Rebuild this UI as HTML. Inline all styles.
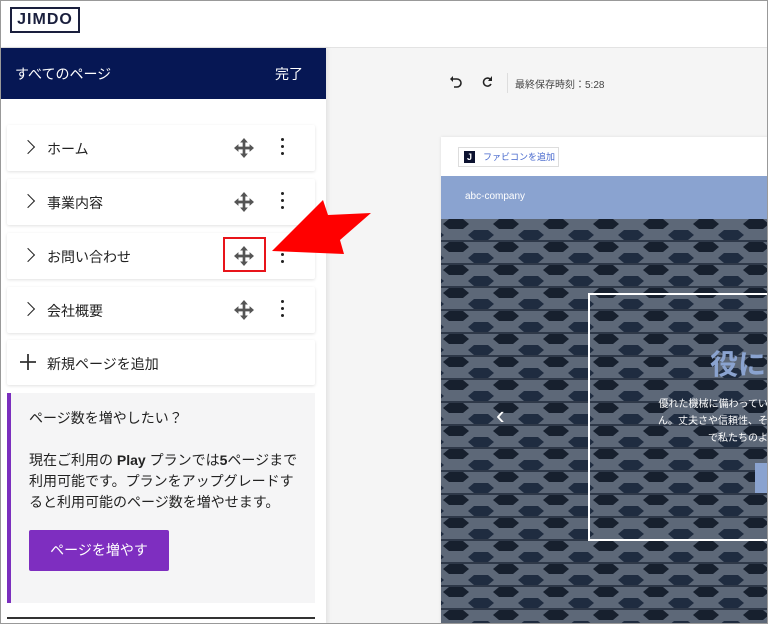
<!DOCTYPE html>
<html><head><meta charset="utf-8"><style>
*{margin:0;padding:0;box-sizing:border-box}
body{width:768px;height:624px;overflow:hidden;background:#f5f5f5;font-family:"Liberation Sans","Noto Sans CJK JP",sans-serif;position:relative;color:#222}
.abs{position:absolute}
.top{left:0;top:0;width:768px;height:48px;background:#fff;border-bottom:1px solid #e3e3e3}
.logo{left:10px;top:7px;width:70px;height:26px;border:2px solid #1a1f3d;font-weight:bold;font-size:16px;letter-spacing:1px;color:#1a1f3d;text-align:center;line-height:22px}
.side{left:0;top:48px;width:326px;height:576px;background:#fff;box-shadow:2px 0 4px rgba(0,0,0,.08)}
.hdr{left:0;top:48px;width:326px;height:51px;background:#061754;color:#fff;font-size:14px}
.card{left:7px;width:308px;height:46px;background:#fff;box-shadow:0 1px 3px rgba(0,0,0,.12);border-radius:2px;font-size:14px}
.card .t{position:absolute;left:40px;top:14px}
.chev{position:absolute;left:16px;top:17px;width:10px;height:10px;border-right:1.8px solid #222;border-top:1.8px solid #222;transform:rotate(45deg)}
.dots{position:absolute;left:274px;top:13px;width:3px}
.dots i{display:block;width:3px;height:3px;background:#222;border-radius:50%;margin-bottom:4px}
.mv{position:absolute;left:227px;top:13px}
</style></head><body>
<div class="abs top"></div>
<div class="abs logo">JIMDO</div>
<div class="abs side"></div>
<div class="abs hdr"><span class="abs" style="left:15px;top:16px">すべてのページ</span><span class="abs" style="left:275px;top:16px">完了</span></div>

<div class="abs card" style="top:125px"><div class="chev"></div><span class="t">ホーム</span><svg class="mv" width="20" height="20" viewBox="0 0 18 18"><path d="M9 0L5.5 4h7zM9 18l-3.5-4h7zM0 9l4-3.5v7zM18 9l-4-3.5v7z" fill="#555"/><path d="M9 3v12M3 9h12" stroke="#555" stroke-width="2.4"/></svg><div class="dots"><i></i><i></i><i></i></div></div>
<div class="abs card" style="top:179px"><div class="chev"></div><span class="t">事業内容</span><svg class="mv" width="20" height="20" viewBox="0 0 18 18"><path d="M9 0L5.5 4h7zM9 18l-3.5-4h7zM0 9l4-3.5v7zM18 9l-4-3.5v7z" fill="#555"/><path d="M9 3v12M3 9h12" stroke="#555" stroke-width="2.4"/></svg><div class="dots"><i></i><i></i><i></i></div></div>
<div class="abs card" style="top:233px"><div class="chev"></div><span class="t">お問い合わせ</span><svg class="mv" width="20" height="20" viewBox="0 0 18 18"><path d="M9 0L5.5 4h7zM9 18l-3.5-4h7zM0 9l4-3.5v7zM18 9l-4-3.5v7z" fill="#555"/><path d="M9 3v12M3 9h12" stroke="#555" stroke-width="2.4"/></svg><div class="dots"><i></i><i></i><i></i></div></div>
<div class="abs card" style="top:287px"><div class="chev"></div><span class="t">会社概要</span><svg class="mv" width="20" height="20" viewBox="0 0 18 18"><path d="M9 0L5.5 4h7zM9 18l-3.5-4h7zM0 9l4-3.5v7zM18 9l-4-3.5v7z" fill="#555"/><path d="M9 3v12M3 9h12" stroke="#555" stroke-width="2.4"/></svg><div class="dots"><i></i><i></i><i></i></div></div>
<div class="abs card" style="top:340px;height:45px"><svg class="abs" style="left:13px;top:14px" width="16" height="16"><path d="M8 0v16M0 8h16" stroke="#333" stroke-width="1.8"/></svg><span class="t">新規ページを追加</span></div>

<div class="abs" style="left:7px;top:393px;width:308px;height:210px;background:#f5f5f6;border-left:4px solid #7b2fbe;font-size:14px;line-height:21px">
<div class="abs" style="left:18px;top:15px">ページ数を増やしたい？</div>
<div class="abs" style="left:18px;top:57px;width:270px">現在ご利用の <b>Play</b> プランでは<b>5</b>ページまで利用可能です。プランをアップグレードすると利用可能のページ数を増やせます。</div>
<div class="abs" style="left:18px;top:137px;width:140px;height:41px;background:#7e2ec0;color:#fff;text-align:center;line-height:41px;border-radius:2px">ページを増やす</div>
</div>
<div class="abs" style="left:7px;top:617px;width:308px;height:2px;background:#333"></div>

<svg class="abs" style="left:448px;top:75px" width="50" height="16" viewBox="0 0 50 16"><path d="M4 4h5a4 4 0 0 1 0 8H6" fill="none" stroke="#222" stroke-width="1.6"/><path d="M2 4l3-3v6z" fill="#222"/><path d="M42 4a4 4 0 1 0 1 5" fill="none" stroke="#222" stroke-width="1.6"/><path d="M44 1v5h-4z" fill="#222"/></svg>
<div class="abs" style="left:507px;top:73px;width:1px;height:20px;background:#ddd"></div>
<div class="abs" style="left:515px;top:76px;font-size:10px;color:#444">最終保存時刻：5:28</div>

<div class="abs" style="left:441px;top:137px;width:327px;height:487px;background:#fff;box-shadow:0 0 3px rgba(0,0,0,.1)"></div>
<div class="abs" style="left:458px;top:147px;width:101px;height:20px;border:1px solid #ddd;font-size:9px;color:#4466cc;line-height:18px;padding-left:24px">ファビコンを追加</div>
<div class="abs" style="left:464px;top:151px;width:11px;height:12px;background:#0c1230;color:#fff;font-size:9px;font-weight:bold;text-align:center;line-height:12px">J</div>
<div class="abs" style="left:441px;top:176px;width:327px;height:43px;background:#8aa3d0;color:#fff;font-size:10px;padding:15px 0 0 24px">abc-company</div>
<svg class="abs" style="left:441px;top:219px" width="327" height="405"><defs><pattern id="h" width="50" height="23" patternUnits="userSpaceOnUse"><rect width="50" height="23" fill="#5d6878"/><polygon points="2,5 8,0 22,0 28,5 22,10 8,10" fill="#17202e"/><polygon points="27,16 33,11 47,11 53,16 47,21 33,21" fill="#1f2c40"/><polygon points="-23,16 -17,11 -3,11 3,16 -3,21 -17,21" fill="#1f2c40"/><rect y="21" width="50" height="2" fill="#2e3848"/></pattern></defs><rect width="327" height="405" fill="url(#h)"/></svg>
<div class="abs" style="left:588px;top:293px;width:190px;height:248px;border:2px solid #fff"></div>
<div class="abs" style="left:710px;top:343px;font-size:28px;font-weight:bold;color:#8aa3d0">役に</div>
<div class="abs" style="left:628px;top:396px;font-size:10px;color:#fff;line-height:17px;text-align:right;width:150px;white-space:nowrap">優れた機械に備わっている<br>ん。丈夫さや信頼性、そし<br>で私たちのよう</div>
<div class="abs" style="left:755px;top:463px;width:13px;height:30px;background:#8aa3d0"></div>
<div class="abs" style="left:496px;top:400px;font-size:26px;color:#fff">‹</div>

<div class="abs" style="left:223px;top:237px;width:43px;height:35px;border:2px solid #e8141a"></div>
<svg class="abs" style="left:0;top:0" width="768" height="624"><polygon points="272,251 323,200 328,215 371,213 340,240 344,254" fill="#f00"/></svg>
<div class="abs" style="left:0;top:0;width:768px;height:624px;border:1px solid #999"></div>
</body></html>
